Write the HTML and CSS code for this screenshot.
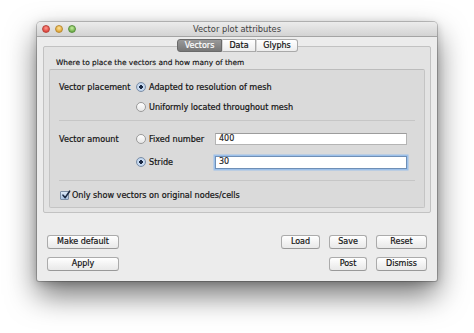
FILE: index.html
```html
<!DOCTYPE html>
<html lang="en">
<head>
    <meta charset="UTF-8">
    <title>Vector plot attributes</title>
    <link rel="stylesheet" href="styles.css">
</head>
<body>
    <div class="window">
        <!-- Title bar -->
        <div class="titlebar">
            <div class="lights">
                <span class="light red"></span>
                <span class="light yellow"></span>
                <span class="light green"></span>
            </div>
            <div class="title">Vector plot attributes</div>
        </div>

        <div class="window-body">
            <div class="tabs">
                <span class="tab active">Vectors</span>
                <span class="tab">Data</span>
                <span class="tab">Glyphs</span>
            </div>

            <div class="pane">
                <div class="caption">Where to place the vectors and how many of them</div>
                <div class="group">
                    <div class="section first">
                        <div class="field-row">
                            <span class="label">Vector placement</span>
                            <label class="option span-2"><span class="radio checked"></span>Adapted to resolution of mesh</label>
                        </div>
                        <div class="field-row gap-4">
                            <span></span>
                            <label class="option span-2"><span class="radio"></span>Uniformly located throughout mesh</label>
                        </div>
                    </div>
                    <div class="sep"></div>
                    <div class="section second">
                        <div class="field-row">
                            <span class="label">Vector amount</span>
                            <label class="option"><span class="radio"></span>Fixed number</label>
                            <div class="input">400</div>
                        </div>
                        <div class="field-row gap-7">
                            <span></span>
                            <label class="option"><span class="radio checked"></span>Stride</label>
                            <div class="input focused">30</div>
                        </div>
                    </div>
                    <div class="sep"></div>
                    <div class="section third">
                        <label class="option check-row"><span class="checkbox">
                            <svg width="10" height="10" viewBox="0 0 10 10"><path d="M2 5.2 L4.2 7.6 L8.6 1.2" fill="none" stroke="#1b2a44" stroke-width="1.6" stroke-linecap="round" stroke-linejoin="round"/></svg>
                        </span>Only show vectors on original nodes/cells</label>
                    </div>
                </div>
            </div>

            <!-- Bottom buttons -->
            <div class="buttons">
                <button class="btn b-make">Make default</button>
                <button class="btn b-load">Load</button>
                <button class="btn b-save">Save</button>
                <button class="btn b-reset">Reset</button>
                <button class="btn b-apply">Apply</button>
                <button class="btn b-post">Post</button>
                <button class="btn b-dismiss">Dismiss</button>
            </div>
        </div>
    </div>
</body>
</html>
```

FILE: styles.css
```css
/* General Styles */
* {
    margin: 0;
    padding: 0;
    box-sizing: border-box;
    font-family: 'DejaVu Sans', 'Verdana', sans-serif;
}

body {
    background: #ffffff;
    width: 474px;
    height: 333px;
    overflow: hidden;
    padding: 22px 0 0 37px;
}

.window {
    width: 400px;
    height: 259px;
    background: #ececec;
    border-radius: 4px 4px 2px 2px;
    box-shadow: 0 14px 30px rgba(0, 0, 0, 0.55), 0 2px 8px rgba(0, 0, 0, 0.2), 0 0 0 1px rgba(0, 0, 0, 0.2);
    display: flex;
    flex-direction: column;
}

/* Title bar */
.titlebar {
    height: 15px;
    background: linear-gradient(#ececec, #d3d3d3);
    border-bottom: 1px solid #a4a4a4;
    border-radius: 4px 4px 0 0;
    display: flex;
    align-items: center;
    position: relative;
}

.lights {
    display: flex;
    gap: 5px;
    padding-left: 5px;
}

.light {
    width: 8px;
    height: 8px;
    border-radius: 50%;
}

.red {
    background: radial-gradient(circle at 50% 35%, #ff9a90, #e0473f 70%);
    border: 1px solid #b8443c;
}

.yellow {
    background: radial-gradient(circle at 50% 35%, #ffe39a, #e2a93a 70%);
    border: 1px solid #b88a34;
}

.green {
    background: radial-gradient(circle at 50% 35%, #c6eea0, #6fb04a 70%);
    border: 1px solid #5b9140;
}

.title {
    position: absolute;
    left: 0;
    right: 0;
    text-align: center;
    font-size: 8.3px;
    color: #3e3e3e;
}

.window-body {
    flex: 1;
    display: flex;
    flex-direction: column;
    padding: 2px 6px 10px 6px;
}

/* Tabs */
.tabs {
    display: flex;
    justify-content: center;
    margin-bottom: -6px;
    position: relative;
    z-index: 1;
    padding-left: 1px;
}

.tab {
    height: 13px;
    line-height: 11px;
    font-size: 8px;
    color: #111111;
    -webkit-text-stroke: 0.2px #111111;
    background: linear-gradient(#ffffff, #ededed);
    border: 1px solid #a9a9a9;
    border-left: 1px solid #d6d6d6;
    text-align: center;
}

.tab:nth-child(1) { width: 45px; }
.tab:nth-child(2) { width: 34px; }
.tab:nth-child(3) { width: 42px; border-radius: 0 3px 3px 0; }

.tab.active {
    color: #ffffff;
    -webkit-text-stroke: 0.2px #ffffff;
    background: linear-gradient(#999999, #777777);
    border: 1px solid #6a6a6a;
    border-radius: 3px 0 0 3px;
}

/* Tab pane */
.pane {
    height: 167px;
    background: #e3e3e3;
    border: 1px solid #c2c2c2;
    border-radius: 2px;
    padding: 11px 5px 4px 5px;
}

.caption {
    height: 10px;
    line-height: 10px;
    font-size: 7.4px;
    color: #111111;
    -webkit-text-stroke: 0.15px #111111;
    padding-left: 7px;
    margin-bottom: 1px;
}

.group {
    height: 139px;
    background: #dadada;
    border: 1px solid #c4c4c4;
    border-top-color: #bcbcbc;
    border-radius: 2px;
    padding: 0 9px;
}

.section.first { padding: 9px 0 5px; }
.section.second { padding: 10px 0 10px; }
.section.third { padding: 6px 0 4px 1px; }

.sep {
    height: 1px;
    background: #c6c6c6;
}

.field-row {
    display: grid;
    grid-template-columns: 77px 78px 1fr;
    align-items: center;
    height: 16px;
    padding-right: 8px;
}

.gap-4 { margin-top: 4px; }
.gap-7 { margin-top: 7px; }

.span-2 { grid-column: span 2; }

.label,
.option {
    font-size: 8.1px;
    color: #141414;
    -webkit-text-stroke: 0.2px #141414;
    white-space: nowrap;
}

.option {
    display: flex;
    align-items: center;
    gap: 3px;
}

.radio {
    width: 10px;
    height: 10px;
    border-radius: 50%;
    border: 1px solid #9a9a9a;
    background: linear-gradient(#ffffff, #e6e6e6);
}

.radio.checked {
    border-color: #7c8ea6;
    background: radial-gradient(circle, #1b2a44 0 1.6px, #cfe0f4 2px, #a8c2e2 100%);
}

.input {
    height: 12px;
    margin-left: 1px;
    background: #ffffff;
    border: 1px solid #b4b4b4;
    border-top-color: #9c9c9c;
    font-size: 8px;
    line-height: 10px;
    padding-left: 3px;
    color: #1a1a1a;
    -webkit-text-stroke: 0.15px #1a1a1a;
}

.input.focused {
    height: 13px;
    border: 1px solid #6f8fb6;
    box-shadow: 0 0 0 1.5px #9cc0ea;
}

.check-row {
    height: 16px;
    gap: 3px;
}

.checkbox {
    width: 9px;
    height: 9px;
    border: 1px solid #7c8ea6;
    border-radius: 1px;
    background: linear-gradient(#dbe8f7, #a9c3e3);
    position: relative;
}

.checkbox svg {
    position: absolute;
    left: 0;
    top: -2px;
}

/* Bottom buttons */
.buttons {
    margin-top: 22px;
    padding: 0 4px;
    display: grid;
    grid-template-columns: 72px 1fr 39px 38px 51px;
    grid-template-rows: 14px 14px;
    column-gap: 9px;
    row-gap: 8px;
}

.btn {
    height: 14px;
    font-size: 8px;
    color: #141414;
    -webkit-text-stroke: 0.2px #141414;
    background: linear-gradient(#ffffff, #f1f1f1 60%, #e9e9e9);
    border: 1px solid #ababab;
    border-bottom-color: #999999;
    border-radius: 3px;
    line-height: 12px;
}

.b-make { grid-column: 1; grid-row: 1; }
.b-load { grid-column: 3; grid-row: 1; }
.b-save { grid-column: 4; grid-row: 1; }
.b-reset { grid-column: 5; grid-row: 1; }
.b-apply { grid-column: 1; grid-row: 2; }
.b-post { grid-column: 4; grid-row: 2; }
.b-dismiss { grid-column: 5; grid-row: 2; }
```
